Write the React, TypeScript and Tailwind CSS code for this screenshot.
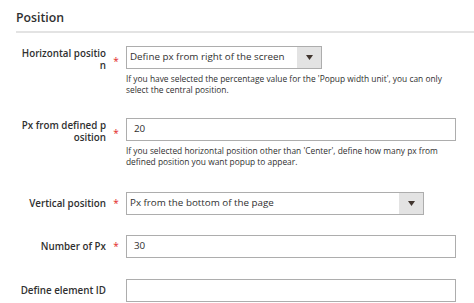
import React from "react";

const font = { fontFamily: '"Open Sans", "Noto Sans", sans-serif' };

function Caret() {
  return (
    <svg width="7" height="5" viewBox="0 0 7 5" className="block">
      <path d="M0 0 L7 0 L3.5 5 Z" fill="#41362f" />
    </svg>
  );
}

function Label({ lines }: { lines: string[] }) {
  return (
    <div className="w-[96px] shrink-0 text-right font-semibold text-[9.8px] leading-[12px] text-[#303030] whitespace-nowrap">
      {lines.map((l, i) => (
        <div key={i}>{l}</div>
      ))}
    </div>
  );
}

function Star({ show = true }: { show?: boolean }) {
  return (
    <div className="w-[20px] shrink-0 flex justify-center text-[#e22626] text-[10px]">
      {show ? "*" : ""}
    </div>
  );
}

function Select({ value, width }: { value: string; width: string }) {
  return (
    <div className={`${width} h-[23px] flex border border-[#adadad] bg-white`}>
      <div className="flex-1 flex items-center pl-[3px] text-[9.8px] text-[#303030] whitespace-nowrap overflow-hidden">
        {value}
      </div>
      <div className="w-[24px] bg-[#e3e3e3] flex items-center justify-center">
        <Caret />
      </div>
    </div>
  );
}

function Input({ value }: { value: string }) {
  return (
    <div className="w-[330px] h-[23px] flex items-center border border-[#adadad] bg-white pl-[7px] text-[9.8px] text-[#303030]">
      {value}
    </div>
  );
}

function Help({ lines }: { lines: string[] }) {
  return (
    <div className="mt-[4px] text-[8.4px] leading-[11px] text-[#303030]">
      {lines.map((l, i) => (
        <div key={i}>{l}</div>
      ))}
    </div>
  );
}

export default function App() {
  return (
    <div className="w-[474px] h-[303px] overflow-hidden bg-white" style={font}>
      <div className="pl-[16px]">
        <div className="h-[33px] pt-[9px] text-[12.3px] font-semibold text-[#303030] border-b-2 border-[#e3e3e3]">
          Position
        </div>
      </div>

      <div className="pl-[10px] pt-[13px]">
        <div className="flex mb-[23px]">
          <div className="pt-[2px]">
            <Label lines={["Horizontal positio", "n"]} />
          </div>
          <div className="pt-[8px]"><Star /></div>
          <div>
            <Select value="Define px from right of the screen" width="w-[196px]" />
            <Help
              lines={[
                "If you have selected the percentage value for the 'Popup width unit', you can only",
                "select the central position.",
              ]}
            />
          </div>
        </div>

        <div className="flex mb-[25px]">
          <div className="pt-[2px]">
            <Label lines={["Px from defined p", "osition"]} />
          </div>
          <div className="pt-[8px]"><Star /></div>
          <div>
            <Input value="20" />
            <Help
              lines={[
                "If you selected horizontal position other than 'Center', define how many px from",
                "defined position you want popup to appear.",
              ]}
            />
          </div>
        </div>

        <div className="flex items-center mb-[20px]">
          <Label lines={["Vertical position"]} />
          <Star />
          <Select value="Px from the bottom of the page" width="w-[298px]" />
        </div>

        <div className="flex items-center mb-[21px]">
          <Label lines={["Number of Px"]} />
          <Star />
          <Input value="30" />
        </div>

        <div className="flex items-center">
          <Label lines={["Define element ID"]} />
          <Star show={false} />
          <Input value="" />
        </div>
      </div>
    </div>
  );
}
